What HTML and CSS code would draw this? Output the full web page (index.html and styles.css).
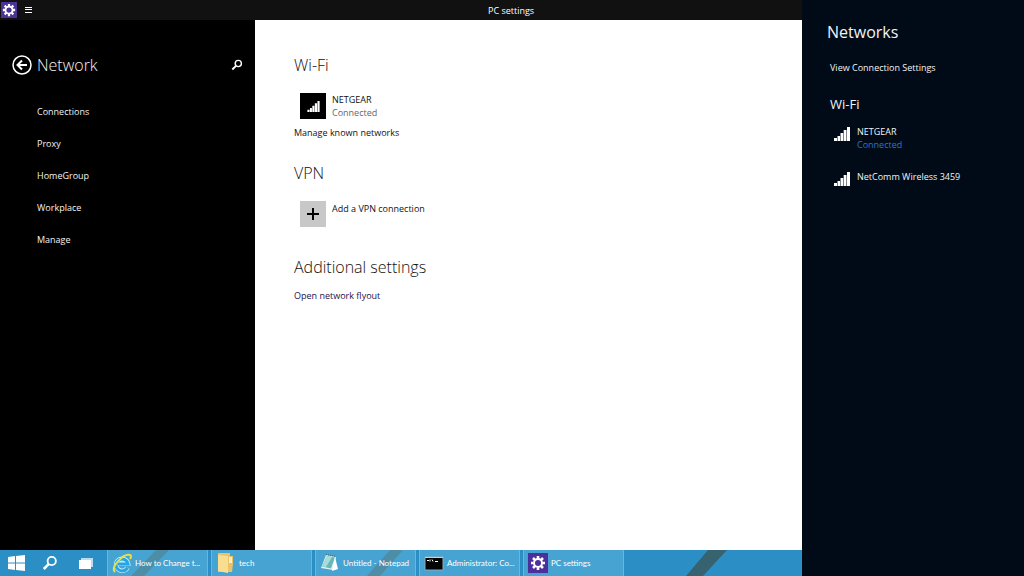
FILE: index.html
```html
<!DOCTYPE html>
<html lang="en">
<head>
<meta charset="utf-8">
<title>PC settings</title>
<link rel="stylesheet" href="styles.css">
</head>
<body>
<svg class="defs" aria-hidden="true">
  <symbol id="gear" viewBox="0 0 16 16">
    <g fill="none" stroke="#fff"><circle cx="8" cy="8" r="4" stroke-width="2"/>
    <path stroke-width="2.6" d="M8 1v2.5M8 12.500V15M1 8h2.500M12.500 8H15M3 3l1.900 1.900M11.100 11.100L13 13M13 3l-1.900 1.900M4.900 11.100L3 13"/></g>
  </symbol>
  <symbol id="search" viewBox="0 0 12 12">
    <g fill="none" stroke="#fff"><circle cx="7.300" cy="4.500" r="3.100" stroke-width="1.400"/><path stroke-width="1.900" d="M5 6.800L1.300 10.500"/></g>
  </symbol>
  <symbol id="signal" viewBox="0 0 16 14">
    <path fill="#fff" d="M0 11h3v3H0zM3.500 9h2.500v5H3.500zM6.500 6h2.700v8H6.500zM9.700 3h2.800v11H9.700zM13 0h3v14h-3z"/>
  </symbol>
</svg>
<div class="screen">
  <div class="desktop">
    <header class="titlebar">
      <span class="app-icon"><svg width="14" height="14"><use href="#gear"/></svg></span>
      <button class="menu" aria-label="App menu"><svg width="7" height="6" viewBox="0 0 7 6"><path stroke="#fff" d="M0 .5h7M0 2.500h7M0 5.500h7"/></svg></button>
      <span class="window-title">PC settings</span>
    </header>
    <div class="window">
      <aside class="sidebar">
        <div class="sidebar-head">
          <button class="back" aria-label="Back"><svg width="20" height="20" viewBox="0 0 20 20" fill="none" stroke="#fff"><circle cx="10" cy="10" r="9" stroke-width="1.500"/><path stroke-width="2" d="M15 10H6M10 5.500L5.500 10l4.500 4.500"/></svg></button>
          <h1>Network</h1>
          <button class="find" aria-label="Search settings"><svg width="12" height="12"><use href="#search"/></svg></button>
        </div>
        <nav class="nav">
          <a href="#">Connections</a>
          <a href="#">Proxy</a>
          <a href="#">HomeGroup</a>
          <a href="#">Workplace</a>
          <a href="#">Manage</a>
        </nav>
      </aside>
      <main class="content">
        <section>
          <h2>Wi-Fi</h2>
          <button class="item">
            <span class="tile dark"><svg width="13" height="11" viewBox="0 0 16 14"><use href="#signal" width="16" height="14"/></svg></span>
            <span class="item-text"><span>NETGEAR</span><span class="status">Connected</span></span>
          </button>
          <a class="link" href="#">Manage known networks</a>
        </section>
        <section>
          <h2>VPN</h2>
          <button class="item">
            <span class="tile"><svg width="12" height="12" viewBox="0 0 12 12"><path stroke="#000" stroke-width="2" d="M0 6h12M6 0v12"/></svg></span>
            <span class="item-text">Add a VPN connection</span>
          </button>
        </section>
        <section>
          <h2>Additional settings</h2>
          <a class="link navy" href="#">Open network flyout</a>
        </section>
      </main>
    </div>
    <footer class="taskbar">
      <svg class="streaks" width="802" height="26" viewBox="0 0 802 26" aria-hidden="true"><path fill="#36636f" d="M156 0h13l-25 26h-13zM390 0h13l-23 26h-13zM708 0h19l-24 26h-17z"/></svg>
      <button class="sys" aria-label="Start"><svg width="17" height="16" viewBox="0 0 17 16"><path fill="#fff" d="M0 2l7-1v6.500H0zM8 1l9-1v7.500H8zM0 8.500h7V15l-7-1zM8 8.500h9V16l-9-1z"/></svg></button>
      <button class="sys" aria-label="Search"><svg width="16" height="16"><use href="#search"/></svg></button>
      <button class="sys" aria-label="Task view"><svg width="14" height="11" viewBox="0 0 14 11"><path fill="#b9dcf0" d="M2 0h12v9h-2V2H2z"/><path fill="#fff" d="M0 2h12v9H0z"/></svg></button>
      <div class="tasks">
        <button class="task"><svg width="20" height="20" viewBox="0 0 20 20"><path fill="none" stroke="#c6f0fc" stroke-width="4.500" d="M15.500 14.500A6 6 0 1 1 16 10.500H6"/><path fill="none" stroke="#27a4e4" stroke-width="3" d="M15.500 14.500A6 6 0 1 1 16 11H6"/><path fill="none" stroke="#e6e04f" stroke-width="2" d="M3 19C-2 14 12 0 18 2c1.500.5 1 2.500 0 4"/></svg><span>How to Change t...</span></button>
        <button class="task"><svg width="20" height="20" viewBox="0 0 20 20"><path fill="#e9c369" d="M2 0h12v3h3v8l-1 8H2z"/><path fill="#f9de92" d="M2 2l10 1v17L2 18z"/><path fill="#fff0bd" d="M13 4h3v6h-3z"/></svg><span>tech</span></button>
        <button class="task"><svg width="20" height="20" viewBox="0 0 20 20"><path fill="#e8f2ef" d="M6 2l10 2-3 13-12-2z"/><path fill="#67b8bd" d="M7 3l8 1.500-4 11-9-2z"/><path fill="#a7dcda" d="M7 3l5 1-6 10-4-.5z"/><path fill="#fff" d="M15 4l3 12-6 2z"/><path stroke="#44636c" d="M6 1.500l10 2" stroke-dasharray="1 1"/></svg><span>Untitled - Notepad</span></button>
        <button class="task"><svg width="20" height="20" viewBox="0 0 20 20"><path fill="#050505" stroke="#8faab7" d="M1 4h18v13H1z"/><path fill="#c9d3d7" d="M1 4h18v1H1z"/><path stroke="#fff" d="M3 7.500h2M6 6.500v2M8 6.500l1 2M11 8.500h3"/></svg><span>Administrator: Co...</span></button>
        <button class="task"><span class="task-gear"><svg width="16" height="16"><use href="#gear"/></svg></span><span>PC settings</span></button>
      </div>
    </footer>
  </div>
  <aside class="flyout">
    <h1>Networks</h1>
    <a class="view-settings" href="#">View Connection Settings</a>
    <h2>Wi-Fi</h2>
    <ul class="networks">
      <li><button class="network"><svg width="16" height="14"><use href="#signal"/></svg><span class="item-text"><span>NETGEAR</span><span class="connected">Connected</span></span></button></li>
      <li><button class="network"><svg width="16" height="14"><use href="#signal"/></svg><span class="item-text">NetComm Wireless 3459</span></button></li>
    </ul>
  </aside>
</div>
</body>
</html>
```

FILE: styles.css
```css
* { box-sizing: border-box; }

body {
  margin: 0;
  font: 9px/13px "Open Sans", "Noto Sans", sans-serif;
  color: #111;
  background: #000;
}

h1, h2 { margin: 0; font-weight: 300; }
button { padding: 0; border: 0; background: none; color: inherit; font: inherit; text-align: left; }
a { color: inherit; text-decoration: none; }
svg { display: block; flex: none; }
.defs { position: absolute; width: 0; height: 0; }

.screen { display: flex; min-height: 100vh; }
.desktop { flex: 1; min-width: 0; display: flex; flex-direction: column; }

.titlebar {
  display: flex;
  align-items: center;
  height: 20px;
  padding-left: 1px;
  background: #111;
  color: #fff;
}
.app-icon { display: grid; place-items: center; width: 16px; height: 16px; background: #4b3298; }
.menu { margin-left: 8px; }
.window-title { margin-left: 456px; }

.window { flex: 1; display: flex; }
.sidebar { width: 255px; padding: 33px 12px 0 12px; background: #000; color: #f4f4f4; }
.sidebar-head { display: flex; align-items: center; gap: 5px; }
.sidebar h1 { font-size: 16px; line-height: 24px; }
.find { margin-left: auto; }
.nav { display: flex; flex-direction: column; padding: 19px 0 0 25px; }
.nav a { line-height: 32px; }

.content { flex: 1; padding: 33px 39px; background: #fff; display: flex; flex-direction: column; gap: 22px; }
.content h2 { font-size: 16px; line-height: 24px; }
.item { display: flex; gap: 6px; margin: 16px 0 7px 6px; }
section + section .item { margin-top: 16px; margin-bottom: 6px; }
section + section .item-text { padding-top: 1px; }
.tile { display: grid; place-items: center; width: 26px; height: 26px; background: #c8c8c8; }
.tile.dark { background: #000; }
.item-text { display: flex; flex-direction: column; }
.status { color: #666; }
.link { display: block; color: #111; }
.navy { margin-top: 10px; color: #1d1147; }

.taskbar {
  position: relative;
  display: flex;
  height: 26px;
  background: #2b8fc5;
  overflow: hidden;
  font-family: Lato, sans-serif;
  font-size: 8px;
  color: #fff;
}
.streaks { position: absolute; left: 0; top: 0; }
.sys { width: 36px; display: grid; place-items: center; }
.sys:first-of-type { width: 32px; }
.tasks { display: flex; gap: 3px; position: relative; padding-left: 3px; }
.task {
  display: flex;
  align-items: center;
  gap: 3px;
  width: 101px;
  padding-left: 4px;
  background: rgba(100, 184, 222, .5);
  border: 1px solid rgba(150, 215, 240, .4);
  border-width: 0 1px;
  white-space: nowrap;
}
.task-gear { display: grid; place-items: center; width: 20px; height: 20px; background: #4b2f9c; }

.flyout { width: 222px; padding: 20px 25px; background: #000b17; color: #f0f4f8; }
.flyout h1 { font-size: 16px; line-height: 24px; font-weight: 400; }
.view-settings { display: block; margin: 17px 0 0 3px; }
.flyout h2 { margin: 20px 0 0 3px; font-size: 13px; line-height: 20px; font-weight: 400; }
.networks { margin: 11px 0 0; padding: 0 0 0 7px; list-style: none; display: grid; gap: 19px; }
.network { display: flex; gap: 7px; }
.network svg { margin-top: 2px; }
.connected { color: #2a74d0; }
```
